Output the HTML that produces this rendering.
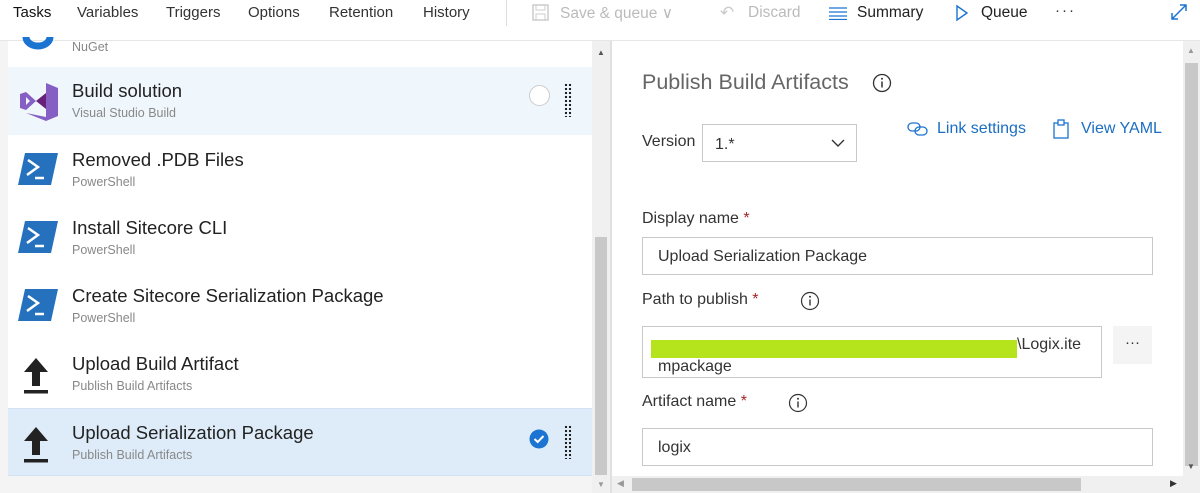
<!DOCTYPE html>
<html><head><style>
*{box-sizing:border-box;margin:0;padding:0}
body{width:1200px;height:493px;overflow:hidden;background:#fff;font-family:"Liberation Sans",sans-serif;position:relative;color:#222}
.a{position:absolute}
.nav span{position:absolute;top:4px;font-size:15px;color:#333}
.row{position:absolute;left:8px;width:584px;height:68px}
.t{position:absolute;left:64px;top:13px;font-size:18.5px;color:#222}
.s{position:absolute;left:64px;top:39px;font-size:12.5px;color:#888}
.ic{position:absolute;left:10px;top:16px}
.lbl{position:absolute;font-size:16px;color:#333}
.inp{position:absolute;border:1px solid #c8c8c8;background:#fff;font-size:16px;color:#333}
.grip{position:absolute;left:556px;top:16px;width:8px;height:34px;background-image:radial-gradient(circle,#222 1.1px,transparent 1.3px);background-size:4px 4px}
</style></head><body>
<div class="nav">
<span style="left:13px;color:#111">Tasks</span>
<span style="left:77px">Variables</span>
<span style="left:166px">Triggers</span>
<span style="left:248px">Options</span>
<span style="left:329px">Retention</span>
<span style="left:423px">History</span>
</div>
<div class="a" style="left:506px;top:0;width:1px;height:26px;background:#ddd"></div>
<svg class="a" style="left:532px;top:4px" width="18" height="18"><rect x="1" y="1" width="15" height="15" fill="none" stroke="#ccc" stroke-width="1.5"/><rect x="4" y="1" width="9" height="5" fill="none" stroke="#ccc"/><rect x="4" y="10" width="9" height="6" fill="none" stroke="#ccc"/></svg>
<div class="a" style="left:560px;top:4px;font-size:15.5px;color:#bbb">Save &amp; queue ∨</div>
<div class="a" style="left:720px;top:3px;font-size:17px;color:#ccc">↶</div>
<div class="a" style="left:748px;top:4px;font-size:15.5px;color:#bbb">Discard</div>
<svg class="a" style="left:829px;top:6px" width="18" height="14"><g stroke="#1b73d2" stroke-width="1.3"><path d="M0 2h18M0 6h18M0 10h18M0 13.5h18"/></g></svg>
<div class="a" style="left:857px;top:4px;font-size:15.5px;color:#222">Summary</div>
<svg class="a" style="left:955px;top:4px" width="14" height="18"><path d="M2 2L12 9L2 16Z" fill="none" stroke="#1b73d2" stroke-width="1.4"/></svg>
<div class="a" style="left:981px;top:4px;font-size:15.5px;color:#222">Queue</div>
<div class="a" style="left:1055px;top:2px;font-size:15px;color:#333;letter-spacing:2px">···</div>
<svg class="a" style="left:1170px;top:3px" width="18" height="18"><path d="M2 16L16 2M10 2h6v6M2 10v6h6" fill="none" stroke="#1b73d2" stroke-width="1.5"/></svg>
<div class="a" style="left:0;top:40px;width:1200px;height:1px;background:#e6e6e6"></div>

<div class="a" style="left:0;top:41px;width:8px;height:452px;background:#f4f4f4"></div>
<div class="row" style="top:41px;height:26px"><svg class="ic" style="top:-6px" width="40" height="20"><path d="M8 2a12 9 0 0 0 24 0" fill="none" stroke="#1b73d2" stroke-width="7"/></svg><div class="s" style="top:-1px">NuGet</div></div>
<div class="row" style="top:67px;background:#eff6fc"><svg class="ic" style="top:14px" width="42" height="42"><path d="M28 2L40 7V35L28 40L8 32L28 36Z" fill="#865fc5"/><path d="M2 13L8 11L18 20L8 29L2 27Z M8 16V24L12 20Z" fill="#865fc5" fill-rule="evenodd"/><path d="M18 20L28 12V28Z" fill="#68217a"/></svg>
<div class="t">Build solution</div><div class="s">Visual Studio Build</div>
<div class="a" style="left:521px;top:18px;width:21px;height:21px;border-radius:50%;border:1.5px solid #ccc;background:#fff"></div><div class="grip"></div></div>
<div class="row" style="top:136px"><svg class="ic" width="40" height="34"><path d="M7 1H40L33 33H0Z" fill="#2671be"/><path d="M10 8L20 15L9 23" fill="none" stroke="#fff" stroke-width="2.5"/><path d="M17 26H26" stroke="#fff" stroke-width="2.5"/></svg><div class="t">Removed .PDB Files</div><div class="s">PowerShell</div></div>
<div class="row" style="top:204px"><svg class="ic" width="40" height="34"><path d="M7 1H40L33 33H0Z" fill="#2671be"/><path d="M10 8L20 15L9 23" fill="none" stroke="#fff" stroke-width="2.5"/><path d="M17 26H26" stroke="#fff" stroke-width="2.5"/></svg><div class="t">Install Sitecore CLI</div><div class="s">PowerShell</div></div>
<div class="row" style="top:272px"><svg class="ic" width="40" height="34"><path d="M7 1H40L33 33H0Z" fill="#2671be"/><path d="M10 8L20 15L9 23" fill="none" stroke="#fff" stroke-width="2.5"/><path d="M17 26H26" stroke="#fff" stroke-width="2.5"/></svg><div class="t">Create Sitecore Serialization Package</div><div class="s">PowerShell</div></div>
<div class="row" style="top:340px"><svg class="ic" width="40" height="42"><path d="M18 2L6 16H14V30H22V16H30Z" fill="#222"/><rect x="6" y="34" width="24" height="3.5" fill="#222"/></svg><div class="t">Upload Build Artifact</div><div class="s">Publish Build Artifacts</div></div>
<div class="row" style="top:408px;background:#deecf9;border-top:1px solid #d0e2f4;border-bottom:1px solid #d0e2f4"><svg class="ic" width="40" height="42"><path d="M18 2L6 16H14V30H22V16H30Z" fill="#222"/><rect x="6" y="34" width="24" height="3.5" fill="#222"/></svg><div class="t">Upload Serialization Package</div><div class="s">Publish Build Artifacts</div>
<svg class="a" style="left:521px;top:20px" width="20" height="20"><circle cx="10" cy="10" r="9.5" fill="#1b73d2"/><path d="M5.5 10L8.7 13L14.5 7" fill="none" stroke="#fff" stroke-width="2"/></svg><div class="grip"></div></div>
<div class="a" style="left:0;top:476px;width:592px;height:17px;background:#f4f4f4"></div>
<div class="a" style="left:592px;top:41px;width:18px;height:452px;background:#f0f0f0"></div>
<div class="a" style="left:595px;top:237px;width:12px;height:238px;background:#c8c8c8"></div>
<div class="a" style="left:597px;top:48px;font-size:8px;color:#555">▲</div>
<div class="a" style="left:597px;top:480px;font-size:8px;color:#999">▼</div>
<div class="a" style="left:610px;top:41px;width:2px;height:452px;background:#e0e0e0"></div>

<div class="a" style="left:642px;top:70px;font-size:21.5px;color:#666">Publish Build Artifacts</div>
<svg class="a" style="left:872px;top:73px" width="20" height="20"><circle cx="10" cy="10" r="8.5" fill="none" stroke="#333" stroke-width="1.3"/><path d="M10 8.5V14.5" stroke="#333" stroke-width="1.5"/><circle cx="10" cy="5.7" r="1" fill="#333"/></svg>
<div class="lbl" style="left:642px;top:133px">Version</div>
<div class="inp" style="left:702px;top:124px;width:155px;height:38px"><span class="a" style="left:12px;top:11px">1.*</span><svg class="a" style="left:128px;top:13px" width="14" height="10"><path d="M1 2L7 8L13 2" fill="none" stroke="#333" stroke-width="1.4"/></svg></div>
<svg class="a" style="left:907px;top:121px" width="22" height="16"><rect x="1" y="2" width="12" height="8" rx="4" fill="none" stroke="#1b73d2" stroke-width="1.3"/><rect x="8" y="6" width="12" height="8" rx="4" fill="none" stroke="#1b73d2" stroke-width="1.3"/></svg>
<div class="a" style="left:937px;top:120px;font-size:16px;color:#1b6ec2">Link settings</div>
<svg class="a" style="left:1052px;top:119px" width="18" height="20"><rect x="2" y="4" width="14" height="15" fill="none" stroke="#1b73d2" stroke-width="1.3"/><rect x="6" y="1" width="6" height="5" fill="#fff" stroke="#1b73d2" stroke-width="1.3"/></svg>
<div class="a" style="left:1081px;top:120px;font-size:16px;color:#1b6ec2">View YAML</div>
<div class="lbl" style="left:642px;top:210px">Display name <span style="color:#a4262c">*</span></div>
<div class="inp" style="left:642px;top:237px;width:511px;height:38px"><span class="a" style="left:15px;top:10px">Upload Serialization Package</span></div>
<div class="lbl" style="left:642px;top:291px">Path to publish <span style="color:#a4262c">*</span></div>
<svg class="a" style="left:800px;top:291px" width="20" height="20"><circle cx="10" cy="10" r="8.5" fill="none" stroke="#333" stroke-width="1.2"/><path d="M10 8.5V14.5" stroke="#333" stroke-width="1.4"/><circle cx="10" cy="5.7" r="1" fill="#333"/></svg>
<div class="inp" style="left:642px;top:326px;width:460px;height:52px"><div class="a" style="left:8px;top:13px;width:366px;height:18px;background:#b5e31c"></div><span class="a" style="left:374px;top:9px">\Logix.ite</span><span class="a" style="left:15px;top:31px">mpackage</span></div>
<div class="a" style="left:1113px;top:326px;width:39px;height:38px;background:#f4f4f4;text-align:center;font-size:15px;color:#333;line-height:34px">···</div>
<div class="lbl" style="left:642px;top:393px">Artifact name <span style="color:#a4262c">*</span></div>
<svg class="a" style="left:788px;top:393px" width="20" height="20"><circle cx="10" cy="10" r="8.5" fill="none" stroke="#333" stroke-width="1.2"/><path d="M10 8.5V14.5" stroke="#333" stroke-width="1.4"/><circle cx="10" cy="5.7" r="1" fill="#333"/></svg>
<div class="inp" style="left:642px;top:428px;width:511px;height:38px"><span class="a" style="left:15px;top:10px">logix</span></div>

<div class="a" style="left:1183px;top:41px;width:17px;height:435px;background:#f0f0f0"></div>
<div class="a" style="left:1185px;top:63px;width:13px;height:403px;background:#c8c8c8"></div>
<div class="a" style="left:1187px;top:46px;font-size:8px;color:#999">▲</div>
<div class="a" style="left:1187px;top:462px;font-size:8px;color:#555">▼</div>
<div class="a" style="left:612px;top:476px;width:588px;height:17px;background:#f0f0f0"></div>
<div class="a" style="left:632px;top:478px;width:449px;height:13px;background:#c8c8c8"></div>
<div class="a" style="left:617px;top:478px;font-size:9px;color:#999">◀</div>
<div class="a" style="left:1170px;top:478px;font-size:9px;color:#333">▶</div>
</body></html>
